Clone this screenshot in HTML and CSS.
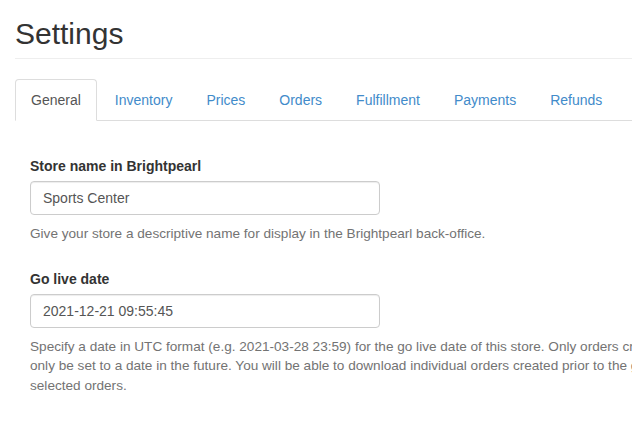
FILE: index.html
```html
<!DOCTYPE html>
<html>
<head>
<meta charset="utf-8">
<link rel="stylesheet" href="styles.css">
</head>
<body>
<div class="page">
  <div class="page-header">
    <h1>Settings</h1>
  </div>
  <ul class="tabs">
    <li class="tab active"><a>General</a></li>
    <li class="tab"><a>Inventory</a></li>
    <li class="tab"><a>Prices</a></li>
    <li class="tab"><a>Orders</a></li>
    <li class="tab"><a>Fulfillment</a></li>
    <li class="tab"><a>Payments</a></li>
    <li class="tab"><a>Refunds</a></li>
  </ul>
  <div class="tab-content">
    <div class="form-group">
      <label class="label">Store name in Brightpearl</label>
      <input class="input" type="text" value="Sports Center">
      <p class="help">Give your store a descriptive name for display in the Brightpearl back-office.</p>
    </div>
    <div class="form-group">
      <label class="label">Go live date</label>
      <input class="input" type="text" value="2021-12-21 09:55:45">
      <p class="help">Specify a date in UTC format (e.g. 2021-03-28 23:59) for the go live date of this store. Only orders created after this date will be downloaded. This date can<br>only be set to a date in the future. You will be able to download individual orders created prior to the go live date using the download option for<br>selected orders.</p>
    </div>
  </div>
</div>
</body>
</html>
```

FILE: styles.css
```css
html, body {
  margin: 0;
  padding: 0;
  overflow: hidden;
  background: #fff;
}
body {
  font-family: "Liberation Sans", Arial, Helvetica, sans-serif;
  font-size: 14px;
  line-height: 20px;
  color: #333;
}
.page {
  width: 1200px;
  padding: 0 15px;
}
.page-header {
  border-bottom: 1px solid #eee;
  padding-bottom: 6px;
  margin: 0 0 20px;
}
.page-header h1 {
  margin: 0;
  padding-top: 16px;
  font-size: 30px;
  font-weight: 500;
  line-height: 36px;
  color: #333;
}
.tabs {
  list-style: none;
  margin: 0;
  padding: 0;
  display: flex;
  border-bottom: 1px solid #ddd;
}
.tab {
  margin-right: 2px;
  margin-bottom: -1px;
}
.tab a {
  display: block;
  padding: 10px 15px;
  line-height: 20px;
  color: #428bca;
  border: 1px solid transparent;
  border-radius: 4px 4px 0 0;
}
.tab.active a {
  color: #555;
  background: #fff;
  border-color: #ddd #ddd transparent;
}
.tab-content {
  padding: 35px 15px 0;
}
.form-group {
  margin-bottom: 25px;
}
.label {
  display: block;
  font-weight: bold;
  margin-bottom: 5px;
}
.input {
  display: block;
  box-sizing: border-box;
  width: 350px;
  height: 34px;
  padding: 6px 12px;
  font-family: inherit;
  font-size: 14px;
  line-height: 20px;
  color: #555;
  background: #fff;
  border: 1px solid #ccc;
  border-radius: 4px;
  box-shadow: inset 0 1px 1px rgba(0,0,0,.075);
  margin: 0;
}
.help {
  margin: 9px 0 10px;
  font-size: 13.6px;
  line-height: 19.6px;
  color: #737373;
  white-space: nowrap;
}
```
